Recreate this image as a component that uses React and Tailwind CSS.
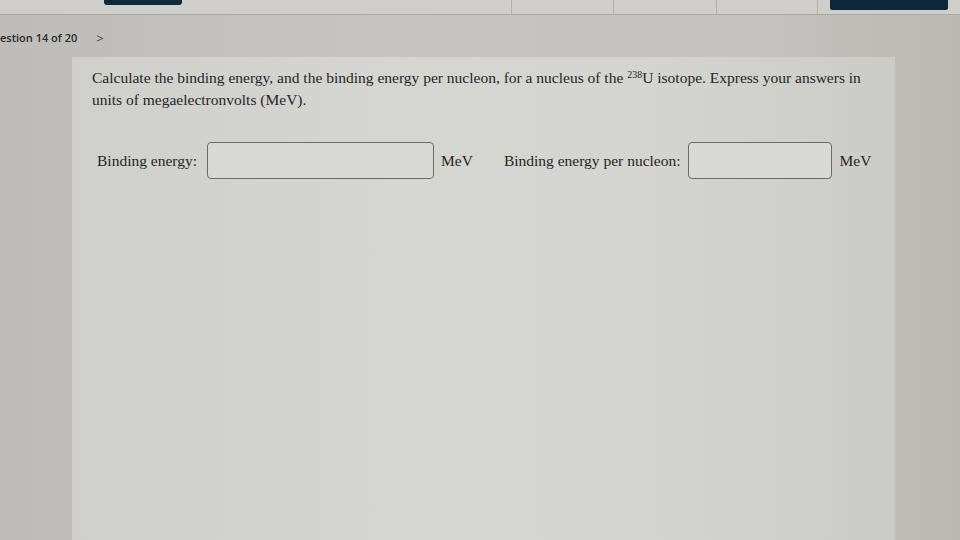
export default function App() {
  return (
    <div className="w-[960px] h-[540px] overflow-hidden flex flex-col bg-[linear-gradient(90deg,#bdbcb8_0%,#c6c5c1_40%,#c3c2be_80%,#b9b8b3_100%)]">
      {/* top bar */}
      <div className="h-[15px] shrink-0 flex border-b border-[#a9a8a4] bg-[#cfcecb]">
        <div className="w-[104px]" />
        <div className="w-[78px] h-[5px] rounded-b-[3px] bg-[#0f2a3c]" />
        <div className="w-[329px]" />
        <div className="w-[102px] border-l border-[#b1b0ac]" />
        <div className="w-[103px] border-l border-[#b1b0ac]" />
        <div className="w-[101px] border-l border-[#b1b0ac]" />
        <div className="w-[13px] border-l border-[#b1b0ac]" />
        <div className="w-[118px] h-[10px] rounded-b-[2px] bg-[#0d2639]" />
      </div>
      {/* question nav */}
      <div className="h-[42px] shrink-0 flex items-start pt-[17px] font-['Open_Sans',sans-serif] text-[11px] font-semibold text-[#2a2a2a]">
        <span className="leading-none">estion 14 of 20</span>
        <span className="ml-[19px] leading-none text-[13px] font-normal text-[#444]">&gt;</span>
      </div>
      {/* panel */}
      <div className="flex-1 ml-[72px] w-[823px] bg-[linear-gradient(90deg,#cfcfcc_0%,#d5d5d2_40%,#d4d4d0_70%,#cbcbc7_100%)] pl-[20px] pr-[10px] pt-[10px] font-['Liberation_Serif',serif] text-[#262626]">
        <p className="text-[15.5px] leading-[22px]">
          Calculate the binding energy, and the binding energy per nucleon, for a nucleus of the{" "}
          <sup className="text-[10px]">238</sup>U isotope. Express your answers in
          <br />
          units of megaelectronvolts (MeV).
        </p>
        <div className="mt-[31px] flex items-center text-[15.5px]">
          <span className="ml-[5px]">Binding energy:</span>
          <div className="ml-[10px] w-[227px] h-[37px] rounded-[4px] border-[1.5px] border-[#6a6a68] bg-[#d8d8d5]" />
          <span className="ml-[7px]">MeV</span>
          <span className="ml-[31px]">Binding energy per nucleon:</span>
          <div className="ml-[7px] w-[144px] h-[37px] rounded-[4px] border-[1.5px] border-[#6a6a68] bg-[#d8d8d5]" />
          <span className="ml-[8px]">MeV</span>
        </div>
      </div>
    </div>
  );
}
